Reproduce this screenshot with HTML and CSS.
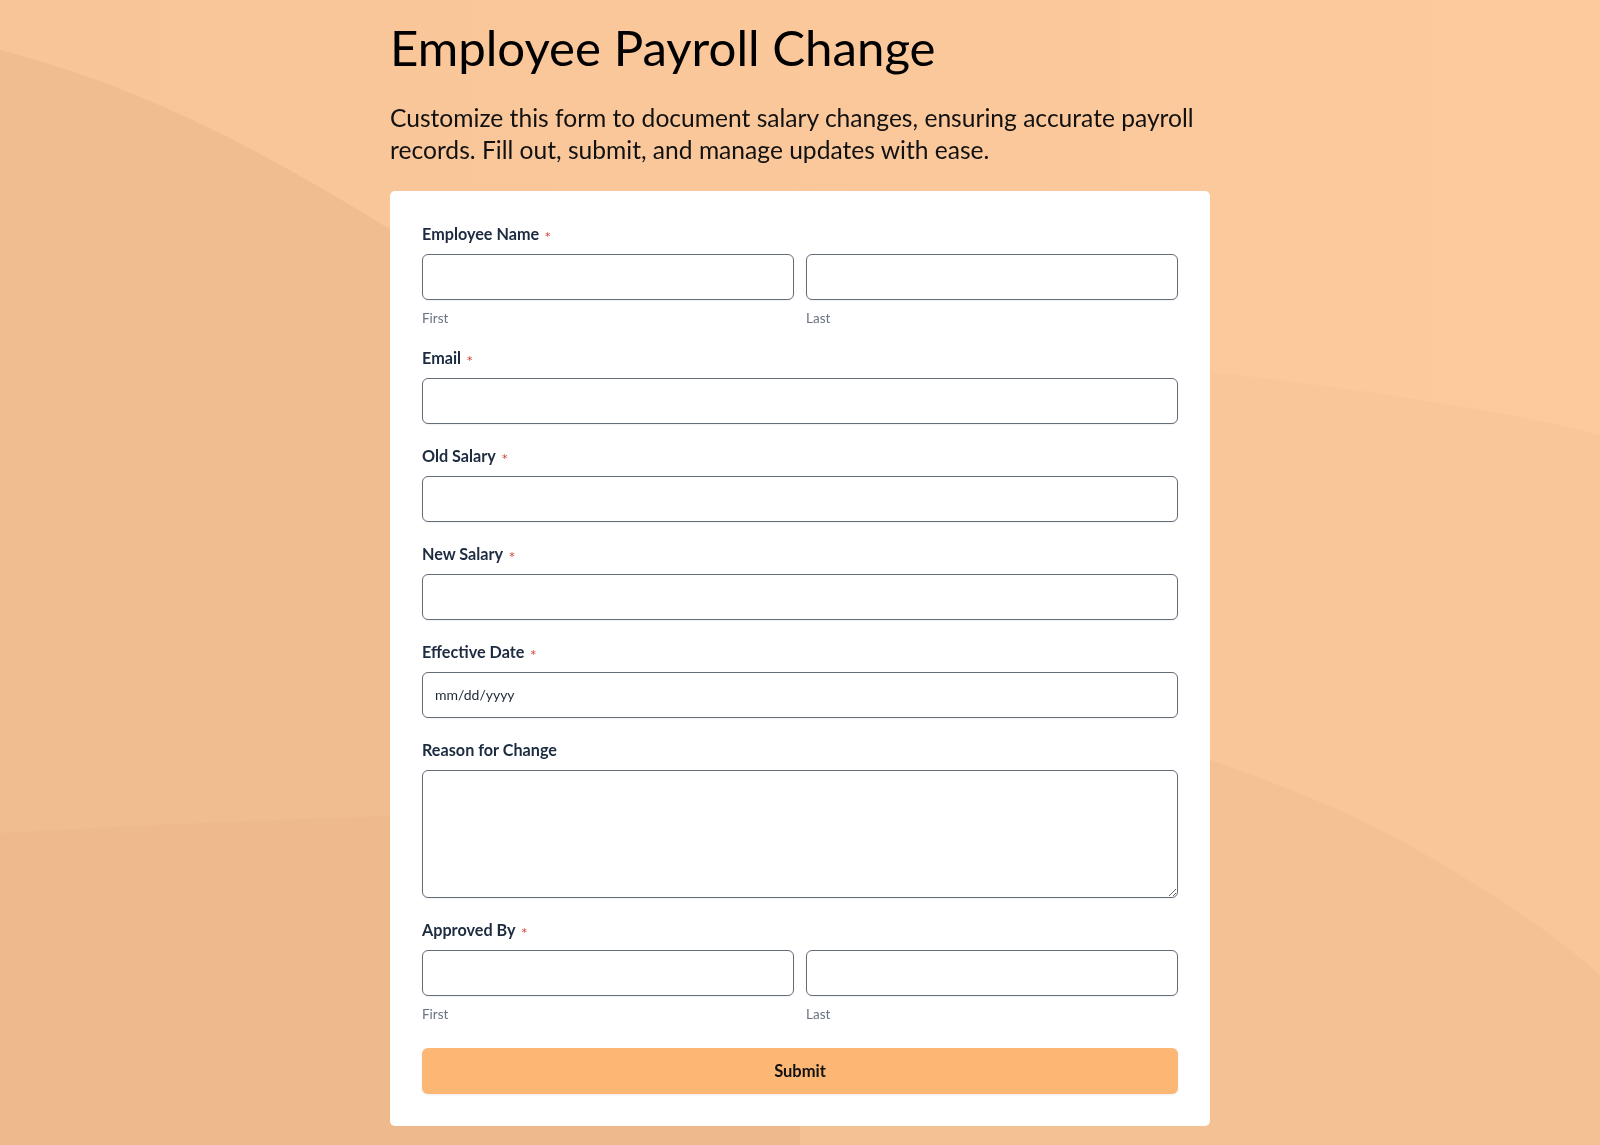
FILE: index.html
```html
<!DOCTYPE html>
<html lang="en">
<head>
<meta charset="utf-8">
<title>Employee Payroll Change</title>
<link rel="stylesheet" href="styles.css">
</head>
<body>
<svg class="backdrop" viewBox="0 0 1600 1145" preserveAspectRatio="none" aria-hidden="true">
  <defs>
    <linearGradient id="base" x1="0" y1="0" x2="1" y2="0">
      <stop offset="0" stop-color="#f8c598"/>
      <stop offset="1" stop-color="#fdca9e"/>
    </linearGradient>
  </defs>
  <rect x="0" y="0" width="1600" height="1145" fill="url(#base)"/>
  <path d="M0,50 C150,88 280,160 420,248 C560,336 700,420 820,520 L820,1145 L0,1145 Z" fill="#f0bd90"/>
  <path d="M0,833 C130,826 260,820 420,815 L820,820 L820,1145 L0,1145 Z" fill="#eeba8c"/>
  <path d="M800,340 C1000,350 1250,372 1420,400 C1500,412 1560,424 1600,435 L1600,1145 L800,1145 Z" fill="#f9c699"/>
  <path d="M800,650 C1000,690 1250,760 1400,840 C1480,885 1550,930 1600,975 L1600,1145 L800,1145 Z" fill="#f4c195"/>
</svg>

<main class="page">
  <h1 class="title">Employee Payroll Change</h1>
  <p class="intro">Customize this form to document salary changes, ensuring accurate payroll records. Fill out, submit, and manage updates with ease.</p>

  <form class="card">
    <div class="field">
      <div class="label">Employee Name<span class="req">*</span></div>
      <div class="pair">
        <div class="part">
          <input class="input" type="text">
          <div class="sub">First</div>
        </div>
        <div class="part">
          <input class="input" type="text">
          <div class="sub">Last</div>
        </div>
      </div>
    </div>

    <div class="field">
      <div class="label">Email<span class="req">*</span></div>
      <input class="input" type="text">
    </div>

    <div class="field">
      <div class="label">Old Salary<span class="req">*</span></div>
      <input class="input" type="text">
    </div>

    <div class="field">
      <div class="label">New Salary<span class="req">*</span></div>
      <input class="input" type="text">
    </div>

    <div class="field">
      <div class="label">Effective Date<span class="req">*</span></div>
      <input class="input date" type="text" placeholder="mm/dd/yyyy">
    </div>

    <div class="field">
      <div class="label">Reason for Change</div>
      <textarea class="input area"></textarea>
    </div>

    <div class="field">
      <div class="label">Approved By<span class="req">*</span></div>
      <div class="pair">
        <div class="part">
          <input class="input" type="text">
          <div class="sub">First</div>
        </div>
        <div class="part">
          <input class="input" type="text">
          <div class="sub">Last</div>
        </div>
      </div>
    </div>

    <button class="submit" type="button">Submit</button>
  </form>
</main>
</body>
</html>
```

FILE: styles.css
```css
html, body {
  margin: 0;
  padding: 0;
}

body {
  font-family: Lato, "Noto Sans", "Liberation Sans", sans-serif;
  background: #fcc99c;
  min-height: 1145px;
}

.backdrop {
  position: fixed;
  left: 0;
  top: 0;
  width: 100%;
  height: 100%;
  z-index: -1;
  display: block;
}

.page {
  width: 820px;
  margin: 0 auto;
  padding-top: 18px;
}

.title {
  margin: 0;
  font-size: 49.2px;
  line-height: 57.6px;
  font-weight: 400;
  color: #000;
}

.intro {
  margin: 26px 0 0;
  font-size: 24.6px;
  line-height: 32px;
  color: #111;
}

.card {
  margin-top: 25px;
  background: #fff;
  border-radius: 5px;
  padding: 31px 32px 32px;
  display: flex;
  flex-direction: column;
}

.field {
  margin-bottom: 20px;
  display: flex;
  flex-direction: column;
}

.label {
  font-size: 16.2px;
  line-height: 24px;
  height: 24px;
  font-weight: 700;
  color: #1c2b3f;
  margin-bottom: 8px;
}

.req {
  color: #d23a2f;
  font-family: "DejaVu Sans", sans-serif;
  font-size: 11px;
  line-height: 0;
  font-weight: 400;
  margin-left: 6px;
  vertical-align: 0;
}

.pair {
  display: grid;
  grid-template-columns: 1fr 1fr;
  column-gap: 12px;
}

.part {
  display: flex;
  flex-direction: column;
}

.input {
  box-sizing: border-box;
  width: 100%;
  height: 46px;
  margin: 0;
  border: 1px solid #646b79;
  border-radius: 6px;
  background: #fff;
  box-shadow: 0 1px 2px rgba(16, 24, 40, 0.06);
  font-family: Lato, "Noto Sans", sans-serif;
  font-size: 14px;
  color: #1f2937;
  padding: 0 12px;
  outline: none;
}

.date::placeholder {
  color: #1f2937;
  opacity: 1;
}

.area {
  height: 128px;
  padding: 10px 12px;
  resize: vertical;
  display: block;
}

.sub {
  margin-top: 9px;
  font-size: 13.5px;
  line-height: 18px;
  height: 17px;
  color: #6b7280;
}

.submit {
  margin-top: 6px;
  height: 46px;
  width: 100%;
  border: none;
  border-radius: 6px;
  background: #fdb774;
  box-shadow: 0 1px 3px rgba(0, 0, 0, 0.08);
  font-family: Lato, "Noto Sans", sans-serif;
  font-size: 16.5px;
  font-weight: 700;
  color: #111;
  cursor: pointer;
}
```
